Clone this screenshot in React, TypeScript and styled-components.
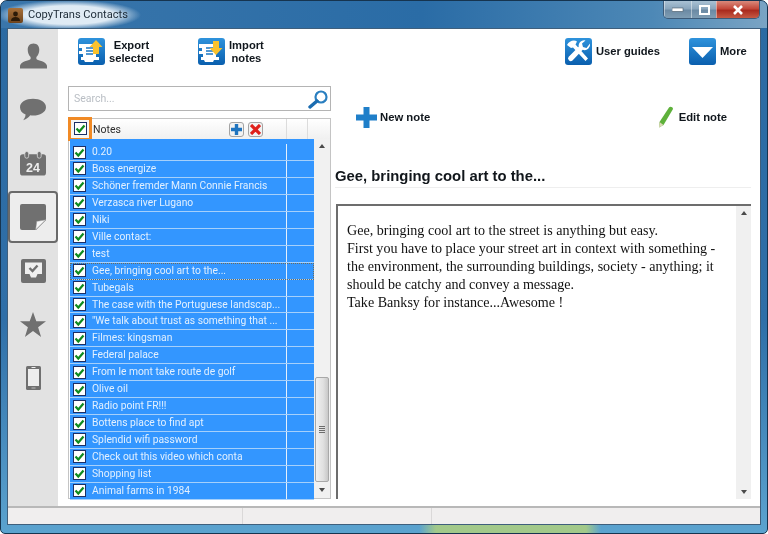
import React from "react";
import styled, { createGlobalStyle } from "styled-components";

const Global = createGlobalStyle`
  html, body { margin: 0; padding: 0; background: #fff; }
  * { box-sizing: border-box; }
  body { font-family: "Liberation Sans", Arial, sans-serif; }
`;

const Win = styled.div`
  width: 768px;
  height: 534px;
  overflow: hidden;
  display: flex;
  flex-direction: column;
  padding: 0 6px 8px;
  border: 1px solid #16344f;
  border-radius: 7px 7px 5px 5px;
  background:
    linear-gradient(90deg, transparent 0, transparent 418px, rgba(170, 205, 130, 0.9) 435px, rgba(170, 205, 130, 0.9) 585px, transparent 600px),
    linear-gradient(180deg, #2b6aa2 0, #2f6fa8 60%, #5ba3cf 100%);
  background-size: 100% 8px, 100% 100%;
  background-position: 0 100%, 0 0;
  background-repeat: no-repeat;
  filter: blur(0.5px);
`;

const TitleBar = styled.div`
  height: 27px;
  margin: 0 -6px;
  padding: 0 7px;
  display: flex;
  align-items: flex-start;
  background:
    radial-gradient(ellipse 72px 15px at 68px 14px, rgba(232, 241, 248, 0.95) 62%, rgba(232, 241, 248, 0) 100%),
    linear-gradient(90deg, #3a76ab 0, #2a6ca6 55%, #4d88b6 85%, #7aa4c4 100%);
`;

const AppIcon = styled.div`
  width: 15px;
  height: 15px;
  margin-top: 7px;
  border-radius: 2px;
  background: linear-gradient(180deg, #a9713a, #6d431c);
  display: flex;
  align-items: center;
  justify-content: center;
`;

const TitleText = styled.div`
  margin: 5px 0 0 5px;
  font-family: Roboto, sans-serif;
  font-size: 11.1px;
  line-height: 18px;
  color: #1c2a36;
`;

const Controls = styled.div`
  margin-left: auto;
  display: flex;
  height: 18px;
  border: 1px solid #3c5a78;
  border-top: 0;
  border-radius: 0 0 5px 5px;
  overflow: hidden;
`;

const CtlButton = styled.div<{ $w: number; $close?: boolean }>`
  width: ${(p) => p.$w}px;
  display: flex;
  align-items: center;
  justify-content: center;
  border-left: 1px solid rgba(255, 255, 255, 0.45);
  background: ${(p) =>
    p.$close
      ? "linear-gradient(180deg, #d98a7c 0, #c3483a 45%, #a92a1e 55%, #c65a44 100%)"
      : "linear-gradient(180deg, #a9c1d4 0, #8aa6bd 45%, #6b8aa4 55%, #7f9db3 100%)"};
`;

const Client = styled.div`
  flex: 1;
  min-height: 0;
  display: flex;
  flex-direction: column;
  background: #fff;
  border: 1px solid #3f5f7c;
`;

const Body = styled.div`
  flex: 1;
  min-height: 0;
  display: flex;
`;

const Sidebar = styled.nav`
  width: 50px;
  background: #e2e2e2;
  display: flex;
  flex-direction: column;
`;

const SideItem = styled.div<{ $active?: boolean }>`
  height: ${(p) => (p.$active ? 51.7 : 53.7)}px;
  margin: ${(p) => (p.$active ? "1px 0" : "0")};
  display: flex;
  align-items: center;
  justify-content: center;
  border-radius: 4px;
  border: ${(p) => (p.$active ? "2px solid #6a6a6a" : "0")};
  background: ${(p) => (p.$active ? "#ededed" : "transparent")};
`;

const Main = styled.div`
  flex: 1;
  min-width: 0;
  display: flex;
  flex-direction: column;
`;

const Toolbar = styled.div`
  height: 57px;
  padding: 9px 10px 0 20px;
  display: flex;
  align-items: flex-start;
`;

const ToolGroup = styled.div<{ $w: number }>`
  width: ${(p) => p.$w}px;
  display: flex;
  align-items: center;
  gap: 4px;
`;

const ToolLabel = styled.div`
  font-size: 11.2px;
  font-weight: 700;
  line-height: 13px;
  color: #10161c;
  text-align: center;
`;

const Spacer = styled.div`
  flex: 1;
`;

const Panes = styled.div`
  flex: 1;
  min-height: 0;
  display: flex;
  padding: 0 9px 7px 10px;
`;

const ListCol = styled.div`
  width: 263px;
  display: flex;
  flex-direction: column;
  gap: 7px;
`;

const Search = styled.div`
  height: 25px;
  border: 1px solid #b4b4b4;
  display: flex;
  align-items: center;
  padding: 0 1px 0 5px;
  font-family: Roboto, sans-serif;
  font-size: 10.5px;
  color: #b9bec4;
`;

const ListBox = styled.div`
  flex: 1;
  min-height: 0;
  border: 1px solid #c4c4c4;
  display: flex;
  flex-direction: column;
`;

const ListHead = styled.div`
  height: 20px;
  display: flex;
  align-items: center;
  background: linear-gradient(180deg, #ffffff, #f0f0f0);
  font-family: Roboto, sans-serif;
  font-size: 10.5px;
  color: #2c2c2c;
`;

const HeadCheck = styled.div`
  width: 24px;
  height: 24px;
  margin: -1px 1px 0 -1px;
  border: 3px solid #f18a25;
  display: flex;
  align-items: center;
  justify-content: center;
  background: #f7f7f7;
`;

const HeadTitle = styled.div`
  width: 136px;
`;

const HeadBtn = styled.div`
  width: 15px;
  height: 15px;
  margin-right: 4px;
  border: 1px solid #a4a4a4;
  border-radius: 3px;
  background: #f2f2f2;
  display: flex;
  align-items: center;
  justify-content: center;
`;

const HeadCell = styled.div<{ $w: number; $ml?: number }>`
  width: ${(p) => p.$w}px;
  margin-left: ${(p) => p.$ml ?? 0}px;
  height: 100%;
  border-left: 1px solid #dcdcdc;
`;

const ListBody = styled.div`
  flex: 1;
  min-height: 0;
  display: flex;
  padding-left: 1px;
`;

const Rows = styled.div`
  width: 244px;
`;

const Row = styled.div`
  height: 16.95px;
  display: flex;
  align-items: center;
  background: #3396ff;
  border-bottom: 1px solid #a6d0fb;
  color: #e2f0ff;
  font-family: Roboto, sans-serif;
  font-size: 10.3px;
  white-space: nowrap;
  &:first-child {
    height: 22px;
    padding-top: 5px;
  }
`;

const FocusRow = styled(Row)`
  outline: 1px dotted #6b6b5a;
  outline-offset: -1px;
`;

const RowCheck = styled.div`
  width: 13px;
  height: 13px;
  margin: 0 6px 0 3px;
  border: 1px solid #1d2f66;
  background: #fff;
  display: flex;
  align-items: center;
  justify-content: center;
  flex: none;
`;

const HeadBox = styled(RowCheck)`
  margin: 0;
`;

const RowName = styled.div`
  width: 194px;
  overflow: hidden;
  height: 100%;
  line-height: 15px;
`;

const RowSplit = styled.div`
  width: 1px;
  height: 100%;
  background: #e4f0fd;
  flex: none;
`;

const Scroll = styled.div`
  flex: 1;
  display: flex;
  flex-direction: column;
  align-items: center;
  background: #f1f1f1;
  padding: 5px 0 6px;
`;

const Arrow = styled.div<{ $down?: boolean }>`
  width: 0;
  height: 0;
  border-left: 3.5px solid transparent;
  border-right: 3.5px solid transparent;
  ${(p) => (p.$down ? "border-top: 4px solid #4a4a4a;" : "border-bottom: 4px solid #4a4a4a;")}
`;

const Thumb = styled.div`
  width: 14px;
  height: 105px;
  margin-top: auto;
  margin-bottom: 6px;
  border: 1px solid #a8a8a8;
  border-radius: 2px;
  background: linear-gradient(90deg, #f0f0f0, #e0e0e0 60%, #c8c8c8);
  display: flex;
  flex-direction: column;
  align-items: center;
  justify-content: center;
  gap: 1px;
`;

const Grip = styled.div`
  width: 6px;
  height: 1px;
  background: #6d6d6d;
`;

const NoteCol = styled.div`
  flex: 1;
  min-width: 0;
  margin-left: 5px;
  display: flex;
  flex-direction: column;
`;

const NoteActions = styled.div`
  height: 58px;
  padding: 4px 24px 0 20px;
  display: flex;
  align-items: center;
  font-size: 11.3px;
  font-weight: 700;
  color: #10161c;
`;

const NoteAction = styled.div<{ $gap: number }>`
  display: flex;
  align-items: center;
  gap: ${(p) => p.$gap}px;
`;

const NoteTitle = styled.h2`
  margin: 0 0 0 -1px;
  height: 44px;
  padding-top: 22px;
  border-bottom: 1px solid #eeeeee;
  font-size: 14.85px;
  line-height: 20px;
  font-weight: 700;
  color: #11161b;
`;

const Editor = styled.div`
  flex: 1;
  min-height: 0;
  margin-top: 16px;
  display: flex;
  border-top: 2px solid #6d6d6d;
  border-left: 2px solid #6d6d6d;
`;

const EditorText = styled.div`
  flex: 1;
  padding: 14.5px 0 0 9px;
  font-family: "Liberation Serif", serif;
  font-size: 14.08px;
  line-height: 18.1px;
  color: #111;
  white-space: nowrap;
`;

const EditorScroll = styled.div`
  width: 15px;
  background: #f0f0f0;
  display: flex;
  flex-direction: column;
  align-items: center;
  justify-content: space-between;
  padding: 5px 0;
`;

const Status = styled.div`
  height: 18px;
  flex: none;
  display: flex;
  background: #f0eeee;
  border-top: 2px solid #b8b8b8;
`;

const StatusCell = styled.div<{ $w?: number }>`
  ${(p) => (p.$w ? `width: ${p.$w}px;` : "flex: 1;")}
  border-right: 1px solid #dad8d8;
  &:last-child { border-right: 0; }
`;

const Tile = ({ children }: { children: React.ReactNode }) => (
  <svg width="27" height="27" viewBox="0 0 27 27">
    <defs>
      <linearGradient id="tile" x1="0" y1="0" x2="0" y2="1">
        <stop offset="0" stopColor="#2f93dc" />
        <stop offset="1" stopColor="#0a5fae" />
      </linearGradient>
    </defs>
    <rect width="27" height="27" rx="3" fill="url(#tile)" />
    {children}
  </svg>
);

const Doc = () => (
  <>
    <path d="M1 6h17v13h3v3h-5l-1 2H7l-1-2H3v-3h2v-3H1v-3h3v-3H1z" fill="#fff" />
    <path d="M8 10h7M8 13h7M8 16h7" stroke="#1877c5" strokeWidth="1.5" fill="none" />
  </>
);

const Check = () => (
  <svg width="11" height="11" viewBox="0 0 11 11">
    <path d="M1.5 5.5 4.3 8.500 9.500 2.500" stroke="#0e8a1e" strokeWidth="2.2" fill="none" />
  </svg>
);

const notes = [
  "0.20",
  "Boss energize",
  "Schöner fremder Mann Connie Francis",
  "Verzasca river Lugano",
  "Niki",
  "Ville contact:",
  "test",
  "Gee, bringing cool art to the...",
  "Tubegals",
  "The case with the Portuguese landscap...",
  "\"We talk about trust as something that ...",
  "Filmes: kingsman",
  "Federal palace",
  "From le mont take route de golf",
  "Olive oil",
  "Radio point FR!!!",
  "Bottens place to find apt",
  "Splendid wifi password",
  "Check out this video which conta",
  "Shopping list",
  "Animal farms in 1984",
];

const G = "#707070";

const App = () => (
  <>
    <Global />
    <Win>
      <TitleBar>
        <AppIcon>
          <svg width="9" height="10" viewBox="0 0 9 10">
            <circle cx="4.5" cy="3" r="2.4" fill="#2c1a08" />
            <path d="M0 10c0-3 2-4 4.5-4S9 7 9 10z" fill="#2c1a08" />
          </svg>
        </AppIcon>
        <TitleText>CopyTrans Contacts</TitleText>
        <Controls>
          <CtlButton $w={27}>
            <svg width="12" height="6" viewBox="0 0 12 6">
              <rect y="1" width="11" height="3.4" fill="#fff" stroke="#4a5a68" strokeWidth=".6" />
            </svg>
          </CtlButton>
          <CtlButton $w={25}>
            <svg width="11" height="10" viewBox="0 0 11 10">
              <rect x="1" y="1" width="9" height="8" fill="none" stroke="#fff" strokeWidth="2" />
            </svg>
          </CtlButton>
          <CtlButton $w={43} $close>
            <svg width="12" height="10" viewBox="0 0 12 10">
              <path d="M2 1 10 9M10 1 2 9" stroke="#fff" strokeWidth="2.6" />
            </svg>
          </CtlButton>
        </Controls>
      </TitleBar>
      <Client>
        <Body>
          <Sidebar>
            <SideItem>
              <svg width="27" height="26" viewBox="0 0 28 26">
                <path d="M14 0c4 0 6 3 6 6.500 0 3-1.300 6-3 7.500v2c2 2 10 2 11 7v3H0v-3c1-5 9-5 11-7v-2C9.300 12.500 8 9.500 8 6.500 8 3 10 0 14 0z" fill={G} />
              </svg>
            </SideItem>
            <SideItem>
              <svg width="26" height="23" viewBox="0 0 28 23">
                <path d="M14 0c7.500 0 14 3.700 14 9s-6.500 9-14 9c-1 0-2 0-3-.2C9.500 20 7 22 3.500 23c1.500-1.700 2.300-3.500 2.500-6C2.300 15.400 0 12.500 0 9c0-5.300 6.500-9 14-9z" fill={G} />
              </svg>
            </SideItem>
            <SideItem>
              <svg width="26" height="25" viewBox="0 0 27 25">
                <rect y="3" width="27" height="22" rx="3" fill={G} />
                <rect x="5" y="0" width="4" height="7" rx="2" fill={G} stroke="#e2e2e2" strokeWidth=".8" />
                <rect x="18" y="0" width="4" height="7" rx="2" fill={G} stroke="#e2e2e2" strokeWidth=".8" />
                <text x="13.500" y="21.500" textAnchor="middle" fontFamily="Liberation Sans, sans-serif" fontWeight="700" fontSize="13" fill="#eee">24</text>
              </svg>
            </SideItem>
            <SideItem $active>
              <svg width="26" height="26" viewBox="0 0 26 26">
                <path d="M2 0h22a2 2 0 0 1 2 2v14L16 26H2a2 2 0 0 1-2-2V2a2 2 0 0 1 2-2z" fill={G} />
                <path d="M26 15.500 15.500 26c.6-3 .8-6 1.200-8.700 3-.4 6-.8 9.300-1.800z" fill="#f7f7f7" stroke="#8a8a8a" strokeWidth=".5" />
              </svg>
            </SideItem>
            <SideItem>
              <svg width="25" height="24" viewBox="0 0 25 24">
                <path d="M2 0h21a2 2 0 0 1 2 2v20a2 2 0 0 1-2 2H2a2 2 0 0 1-2-2V2a2 2 0 0 1 2-2z" fill={G} />
                <path d="M4 3.500h17V15h-4.500l-1.500 3.500h-5L8.500 15H4z" fill="#efefef" />
                <path d="M8.500 9 11.500 12 16.500 6.500" stroke={G} strokeWidth="2.400" fill="none" />
              </svg>
            </SideItem>
            <SideItem>
              <svg width="26" height="25" viewBox="0 0 26 25">
                <path d="M13 0l3.300 9.300H26l-7.900 5.900 3 9.800L13 19.100 4.900 25l3-9.800L0 9.300h9.700z" fill={G} />
              </svg>
            </SideItem>
            <SideItem>
              <svg width="15" height="24" viewBox="0 0 15 24">
                <rect width="15" height="24" rx="1.500" fill={G} />
                <rect x="2" y="3" width="11" height="17" fill="#eeeeee" />
                <rect x="5.500" y="1" width="4" height="1" fill="#eee" />
                <rect x="5.500" y="21.500" width="4" height="1" fill="#bbb" />
              </svg>
            </SideItem>
          </Sidebar>
          <Main>
            <Toolbar>
              <ToolGroup $w={120}>
                <Tile>
                  <Doc />
                  <path d="M15 16V9h-3.500L18 2l6.500 7H21v7z" fill="#f9c22e" />
                </Tile>
                <ToolLabel>Export<br />selected</ToolLabel>
              </ToolGroup>
              <ToolGroup $w={120}>
                <Tile>
                  <Doc />
                  <path d="M15 3h6v7h3.500L18 17l-6.500-7H15z" fill="#f9c22e" />
                </Tile>
                <ToolLabel>Import<br />notes</ToolLabel>
              </ToolGroup>
              <Spacer />
              <ToolGroup $w={124}>
                <Tile>
                  <path d="M2 7c2-4 7-5.500 10-3.500l-1.500 3L23 20.500 20.500 23 8 9.500l-2 .5z" fill="#fff" />
                  <path d="M25 5.500a5.500 5.500 0 0 1-7.300 6.300L7.500 22.500a2.700 2.700 0 0 1-3.800-3.800l10-10A5.500 5.500 0 0 1 20.500 2.500l-3.500 3 1 3.500 3.500 1z" fill="#fff" />
                </Tile>
                <ToolLabel>User guides</ToolLabel>
              </ToolGroup>
              <ToolGroup $w={61}>
                <Tile>
                  <path d="M3 9h21L13.500 20z" fill="#fff" />
                </Tile>
                <ToolLabel>More</ToolLabel>
              </ToolGroup>
            </Toolbar>
            <Panes>
              <ListCol>
                <Search>
                  Search...
                  <Spacer />
                  <svg width="22" height="20" viewBox="0 0 22 20">
                    <circle cx="14" cy="8" r="5.500" fill="#fff" stroke="#2a7fc0" strokeWidth="2.200" />
                    <path d="M10 12 3 18" stroke="#1b6cb0" strokeWidth="3.400" strokeLinecap="round" />
                  </svg>
                </Search>
                <ListBox>
                  <ListHead>
                    <HeadCheck>
                      <HeadBox>
                        <Check />
                      </HeadBox>
                    </HeadCheck>
                    <HeadTitle>Notes</HeadTitle>
                    <HeadBtn>
                      <svg width="11" height="11" viewBox="0 0 11 11">
                        <path d="M5.500 0v11M0 5.500h11" stroke="#1f74bf" strokeWidth="3.400" />
                      </svg>
                    </HeadBtn>
                    <HeadBtn>
                      <svg width="11" height="11" viewBox="0 0 11 11">
                        <path d="M1 1l9 9M10 1l-9 9" stroke="#e0201a" strokeWidth="3.200" />
                      </svg>
                    </HeadBtn>
                    <HeadCell $w={21} $ml={19} />
                    <HeadCell $w={23} />
                  </ListHead>
                  <ListBody>
                    <Rows>
                      {notes.map((n, i) => {
                        const R = i === 7 ? FocusRow : Row;
                        return (
                          <R key={n}>
                            <RowCheck>
                              <Check />
                            </RowCheck>
                            <RowName>{n}</RowName>
                            <RowSplit />
                          </R>
                        );
                      })}
                    </Rows>
                    <Scroll>
                      <Arrow />
                      <Thumb>
                        <Grip />
                        <Grip />
                        <Grip />
                        <Grip />
                      </Thumb>
                      <Arrow $down />
                    </Scroll>
                  </ListBody>
                </ListBox>
              </ListCol>
              <NoteCol>
                <NoteActions>
                  <NoteAction $gap={3}>
                    <svg width="21" height="21" viewBox="0 0 21 21">
                      <path d="M10.500 0v21M0 10.500h21" stroke="#1f7fc9" strokeWidth="6" />
                    </svg>
                    New note
                  </NoteAction>
                  <Spacer />
                  <NoteAction $gap={5}>
                    <svg width="16" height="22" viewBox="0 0 16 22">
                      <path d="M11 1.500c1-1.500 4-.5 4 1.500L5.500 19 1 21.500 1.500 16z" fill="#5eb13b" />
                      <path d="M1.500 16 5.500 19 1 21.500z" fill="#dcd9b8" />
                    </svg>
                    Edit note
                  </NoteAction>
                </NoteActions>
                <NoteTitle>Gee, bringing cool art to the...</NoteTitle>
                <Editor>
                  <EditorText>
                    Gee, bringing cool art to the street is anything but easy.
                    <br />
                    First you have to place your street art in context with something -
                    <br />
                    the environment, the surrounding buildings, society - anything; it
                    <br />
                    should be catchy and convey a message.
                    <br />
                    Take Banksy for instance...Awesome !
                  </EditorText>
                  <EditorScroll>
                    <Arrow />
                    <Arrow $down />
                  </EditorScroll>
                </Editor>
              </NoteCol>
            </Panes>
          </Main>
        </Body>
        <Status>
          <StatusCell $w={235} />
          <StatusCell $w={189} />
          <StatusCell />
        </Status>
      </Client>
    </Win>
  </>
);

export default App;
